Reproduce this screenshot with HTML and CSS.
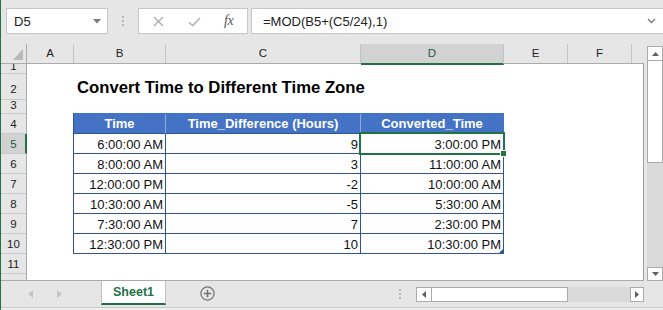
FILE: index.html
```html
<!DOCTYPE html>
<html>
<head>
<meta charset="utf-8">
<link rel="stylesheet" href="styles.css">
</head>
<body>
<div class="app">
  <div class="fbar">
    <div class="namebox">
      <span class="nb-text">D5</span>
      <svg class="nb-caret" width="8" height="5" viewBox="0 0 8 5"><polygon points="0,0 8,0 4,4.5" fill="#7b7b7b"/></svg>
    </div>
    <div class="grip"><i></i><i></i><i></i></div>
    <div class="fbtns">
      <svg class="fb-x" width="11" height="11" viewBox="0 0 11 11"><path d="M1 1L10 10M10 1L1 10" stroke="#ababab" stroke-width="1.3" fill="none"/></svg>
      <svg class="fb-ok" width="13" height="10" viewBox="0 0 13 10"><path d="M1 5.2L4.6 8.6L12 1" stroke="#b3b3b3" stroke-width="1.5" fill="none"/></svg>
      <span class="fb-fx">fx</span>
    </div>
    <div class="finput">
      <span class="fi-text">=MOD(B5+(C5/24),1)</span>
      <svg class="fi-chev" width="9" height="6" viewBox="0 0 9 6"><path d="M1 1L4.5 4.5L8 1" stroke="#7b7b7b" stroke-width="1.4" fill="none"/></svg>
    </div>
  </div>

  <div class="main">
    <div class="sheet">
      <div class="colheads">
        <div class="ch corner"><svg width="10" height="11" viewBox="0 0 10 11"><polygon points="10,0 10,11 0,11" fill="#b9b9b9"/></svg></div>
        <div class="ch ca">A</div>
        <div class="ch cb">B</div>
        <div class="ch cc">C</div>
        <div class="ch cd sel">D</div>
        <div class="ch ce">E</div>
        <div class="ch cf">F</div>
        <div class="ch cg"></div>
      </div>
      <div class="body">
        <div class="rowheads">
          <div class="rh r1"><span>1</span></div>
          <div class="rh r2"><span>2</span></div>
          <div class="rh r3"><span>3</span></div>
          <div class="rh r20"><span>4</span></div>
          <div class="rh r20 sel"><span>5</span></div>
          <div class="rh r20"><span>6</span></div>
          <div class="rh r20"><span>7</span></div>
          <div class="rh r20"><span>8</span></div>
          <div class="rh r20"><span>9</span></div>
          <div class="rh r20"><span>10</span></div>
          <div class="rh r20"><span>11</span></div>
          <div class="rh rlast"></div>
        </div>
        <div class="cells">
          <div class="sp1"></div>
          <div class="title">Convert Time to Different Time Zone</div>
          <div class="sp3"></div>
          <table class="tbl">
            <tr class="thead"><th class="tb">Time</th><th class="tc">Time_Difference (Hours)</th><th class="td">Converted_Time</th></tr>
            <tr><td>6:00:00 AM</td><td>9</td><td>3:00:00 PM</td></tr>
            <tr><td>8:00:00 AM</td><td>3</td><td>11:00:00 AM</td></tr>
            <tr><td>12:00:00 PM</td><td>-2</td><td>10:00:00 AM</td></tr>
            <tr><td>10:30:00 AM</td><td>-5</td><td>5:30:00 AM</td></tr>
            <tr><td>7:30:00 AM</td><td>7</td><td>2:30:00 PM</td></tr>
            <tr><td>12:30:00 PM</td><td>10</td><td>10:30:00 PM</td></tr>
          </table>
          <div class="selbox"></div>
          <div class="fillhandle"></div>
          <div class="resizemark"></div>
        </div>
      </div>
    </div>
    <div class="vscroll">
      <div class="vbtn up"><svg width="7" height="4" viewBox="0 0 7 4"><polygon points="0,4 7,4 3.5,0" fill="#606060"/></svg></div>
      <div class="vthumb"></div>
      <div class="vtrack"></div>
      <div class="vbtn down"><svg width="7" height="4" viewBox="0 0 7 4"><polygon points="0,0 7,0 3.5,4" fill="#606060"/></svg></div>
    </div>
  </div>

  <div class="tabbar">
    <div class="tabnav">
      <svg class="nav-l" width="5" height="8" viewBox="0 0 5 8"><polygon points="5,0 5,8 0,4" fill="#c4c4c4"/></svg>
      <svg class="nav-r" width="5" height="8" viewBox="0 0 5 8"><polygon points="0,0 0,8 5,4" fill="#c4c4c4"/></svg>
    </div>
    <div class="tab">Sheet1</div>
    <div class="addbtn"><svg width="15" height="15" viewBox="0 0 15 15"><circle cx="7.5" cy="7.5" r="6.6" stroke="#6f6f6f" stroke-width="1.2" fill="none"/><path d="M7.5 3.8V11.2M3.8 7.5H11.2" stroke="#6f6f6f" stroke-width="1.4"/></svg></div>
    <div class="tgrip"><i></i><i></i><i></i></div>
    <div class="hscroll">
      <div class="hbtn left"><svg width="4" height="7" viewBox="0 0 4 7"><polygon points="4,0 4,7 0,3.5" fill="#606060"/></svg></div>
      <div class="hthumb"></div>
      <div class="htrack"></div>
      <div class="hbtn right"><svg width="4" height="7" viewBox="0 0 4 7"><polygon points="0,0 0,7 4,3.5" fill="#606060"/></svg></div>
    </div>
  </div>
  <div class="foot"></div>
</div>
</body>
</html>
```
FILE: styles.css
```css
* { box-sizing: border-box; }
html, body { margin: 0; padding: 0; }
body {
  width: 663px;
  height: 310px;
  overflow: hidden;
  background: #e6e6e6;
  font-family: "Liberation Sans", Arial, sans-serif;
  color: #222;
}
.app {
  width: 663px;
  height: 310px;
  border-left: 1px solid #217346;
  display: flex;
  flex-direction: column;
  background: #e6e6e6;
}

/* formula bar */
.fbar {
  height: 44px;
  flex: none;
  display: flex;
  align-items: flex-start;
  padding: 8px 0 0 5px;
}
.namebox {
  width: 102px;
  height: 26px;
  background: #fff;
  border: 1px solid #c6c6c6;
  display: flex;
  align-items: center;
  padding: 0 6px 0 7px;
  justify-content: space-between;
}
.nb-text { font-size: 13px; color: #222; padding-top: 1px; }
.grip {
  width: 30px;
  height: 26px;
  display: flex;
  flex-direction: column;
  align-items: center;
  justify-content: center;
  gap: 2px;
}
.grip i, .tgrip i {
  display: block;
  width: 2px;
  height: 2px;
  background: #b5b5b5;
}
.fbtns {
  width: 110px;
  height: 26px;
  background: #fff;
  border: 1px solid #c6c6c6;
  display: flex;
  align-items: center;
  padding-left: 14px;
}
.fb-x { margin-right: 24px; }
.fb-ok { margin-right: 23px; margin-top: 1px; }
.fb-fx {
  font-family: "Liberation Serif", "Times New Roman", serif;
  font-style: italic;
  font-size: 14px;
  color: #555;
  letter-spacing: -0.5px;
}
.finput {
  flex: 1;
  height: 26px;
  margin-left: 3px;
  margin-right: -3px;
  background: #fff;
  border: 1px solid #c6c6c6;
  display: flex;
  align-items: center;
  justify-content: space-between;
  padding: 0 9px 0 11px;
}
.fi-text { font-size: 13px; color: #222; padding-top: 1px; }

/* sheet */
.main {
  height: 237px;
  flex: none;
  display: flex;
}
.sheet {
  width: 643px;
  display: flex;
  flex-direction: column;
}
.colheads {
  height: 20px;
  display: flex;
  border-bottom: 1px solid #ababab;
}
.ch {
  height: 19px;
  line-height: 19px;
  font-size: 11.5px;
  text-align: center;
  color: #222;
  border-right: 1px solid #c4c4c4;
}
.ch.corner { width: 26px; display: flex; align-items: flex-end; justify-content: flex-end; padding: 0 3px 3px 0; border-right-color: #ababab; }
.ca { width: 47px; }
.cb { width: 92px; }
.cc { width: 195px; }
.cd { width: 143px; }
.ce { width: 64px; }
.cf { width: 64px; }
.cg { flex: 1; border-right: none; }
.ch.sel {
  background: #d2d2d2;
  color: #1e5e3a;
  height: 21px;
  border-bottom: 2px solid #217346;
  position: relative;
  z-index: 1;
}

.body {
  height: 217px;
  display: flex;
  border-bottom: 1px solid #ababab;
}
.rowheads {
  width: 26px;
  flex: none;
  border-right: 1px solid #ababab;
  display: flex;
  flex-direction: column;
}
.rh {
  border-bottom: 1px solid #c9c9c9;
  display: flex;
  align-items: flex-end;
  justify-content: center;
  overflow: hidden;
  font-size: 11.5px;
  line-height: 14px;
  padding-bottom: 2px;
  color: #222;
}
.rh.r1 { height: 10px; padding-bottom: 0; }
.rh.r2 { height: 26px; padding-bottom: 3px; }
.rh.r3 { height: 14px; line-height: 11px; padding-bottom: 2px; overflow: visible; }
.rh.r20 { height: 20px; }
.rh.rlast { height: 6px; border-bottom: none; }
.rh.sel {
  background: #d2d2d2;
  color: #1e5e3a;
  margin-right: -1px;
  border-right: 2px solid #217346;
  padding-left: 1px;
}

.cells {
  flex: 1;
  background: #fff;
  border-right: 1px solid #9f9f9f;
  position: relative;
  overflow: hidden;
}
.sp1 { height: 10px; }
.title {
  height: 26px;
  display: flex;
  align-items: flex-end;
  padding: 0 0 2px 50px;
  font-weight: bold;
  font-size: 16.7px;
  line-height: 20px;
  color: #000;
  white-space: nowrap;
}
.sp3 { height: 13px; }

.tbl {
  border-collapse: separate;
  border-spacing: 0;
  margin-left: 46px;
  border-left: 1px solid #2f5597;
  border-top: 1px solid #4472c4;
  font-size: 13px;
}
.tbl th, .tbl td {
  height: 20px;
  padding: 0;
  border-right: 1px solid #2f5597;
  border-bottom: 1px solid #2f5597;
  white-space: nowrap;
}
.tbl th {
  background: #4472c4;
  color: #fff;
  font-weight: bold;
  text-align: center;
  vertical-align: middle;
  line-height: 19px;
  border-right-color: #8faadc;
  border-bottom-color: #2f5597;
}
.tbl th.td { border-right-color: #4472c4; }
.tbl th.tb { width: 92px; }
.tbl th.tc { width: 195px; }
.tbl th.td { width: 143px; }
.tbl td {
  text-align: right;
  vertical-align: bottom;
  line-height: 16px;
  padding-right: 2px;
  color: #111;
}
.selbox {
  position: absolute;
  left: 332px;
  top: 68px;
  width: 146px;
  height: 23px;
  border: 2px solid #217346;
}
.fillhandle {
  position: absolute;
  left: 473px;
  top: 86px;
  width: 7px;
  height: 7px;
  background: #217346;
  border: 1px solid #fff;
}
.resizemark {
  position: absolute;
  left: 472px;
  top: 185px;
  width: 0;
  height: 0;
  border-left: 4px solid transparent;
  border-bottom: 4px solid #2f5597;
}

/* vertical scrollbar */
.vscroll {
  width: 16px;
  margin-left: 3px;
  margin-top: 2px;
  display: flex;
  flex-direction: column;
  background: #dadada;
}
.vbtn {
  background: #fff;
  border: 1px solid #ababab;
  display: flex;
  align-items: center;
  justify-content: center;
}
.vbtn.up { height: 15px; }
.vbtn.down { height: 14px; }
.vthumb {
  height: 102px;
  background: #fff;
  border: 1px solid #ababab;
  border-top: none;
}
.vtrack { flex: 1; }

/* tab bar */
.tabbar {
  height: 27px;
  flex: none;
  display: flex;
  border-bottom: 1px solid #c8c8c8;
}
.tabnav {
  width: 100px;
  display: flex;
  align-items: center;
  padding-left: 27px;
  padding-bottom: 1px;
}
.nav-l { margin-right: 24px; }
.tab {
  width: 65px;
  height: 24px;
  background: #fff;
  border-left: 1px solid #c0c0c0;
  border-right: 1px solid #c0c0c0;
  border-bottom: 2px solid #217346;
  color: #217346;
  font-weight: bold;
  font-size: 12.5px;
  text-align: center;
  line-height: 23px;
}
.addbtn {
  width: 84px;
  display: flex;
  align-items: center;
  padding-left: 34px;
  padding-bottom: 1px;
}
.tgrip {
  width: 166px;
  display: flex;
  flex-direction: column;
  align-items: flex-end;
  justify-content: center;
  gap: 2px;
  padding-right: 15px;
}
.hscroll {
  width: 228px;
  height: 15px;
  margin-top: 6px;
  display: flex;
  background: #dadada;
}
.hbtn {
  background: #fff;
  border: 1px solid #ababab;
  display: flex;
  align-items: center;
  justify-content: center;
}
.hbtn.left { width: 16px; }
.hbtn.right { width: 14px; }
.hthumb {
  width: 136px;
  background: #fff;
  border: 1px solid #ababab;
  border-left: none;
}
.htrack { flex: 1; }
.foot {
  height: 2px;
  flex: none;
  background: #f0f0f0;
}
```
